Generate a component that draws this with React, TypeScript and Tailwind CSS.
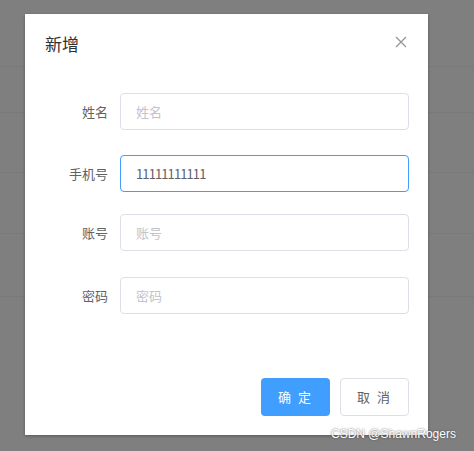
import React from 'react';

const font = { fontFamily: '"Noto Sans CJK SC", "Liberation Sans", sans-serif' };

function Field({
  label,
  placeholder,
  value,
  focused,
  className,
}: {
  label: string;
  placeholder: string;
  value?: string;
  focused?: boolean;
  className?: string;
}) {
  return (
    <div className={`flex items-center ${className ?? ''}`}>
      <label className="w-[75px] shrink-0 pr-3 text-right text-[13px] text-[#606266]">{label}</label>
      <div
        className={`flex h-[37px] flex-1 items-center rounded-[4px] border bg-white pl-[15px] text-[13px] ${
          focused ? 'border-[#409eff]' : 'border-[#dcdfe6]'
        }`}
      >
        {value ? (
          <span className="tracking-[-0.9px] text-[#606266]">{value}</span>
        ) : (
          <span className="text-[#c0c4cc]">{placeholder}</span>
        )}
      </div>
    </div>
  );
}

export default function App() {
  return (
    <div className="relative h-[451px] w-[474px] overflow-hidden bg-[#7f7f7f]" style={font}>
      {/* table rows behind the mask */}
      <div className="flex flex-col">
        <div className="h-[67px] border-b border-[#797979]" />
        <div className="h-[46px] border-b border-[#797979]" />
        <div className="h-[60px] border-b border-[#797979]" />
        <div className="h-[61px] border-b border-[#797979]" />
        <div className="h-[63px] border-b border-[#797979]" />
      </div>

      {/* dialog */}
      <div className="absolute left-[25px] top-[14px] flex h-[421px] w-[403px] flex-col bg-white shadow-[0_1px_3px_rgba(0,0,0,0.3)]">
        <div className="flex items-start justify-between pl-5 pr-[21px] pt-[19px]">
          <span className="text-[17px] leading-[22px] text-[#303133]">新增</span>
          <svg width="12" height="12" viewBox="0 0 12 12" className="mt-[3px]">
            <path d="M1 1 L11 11 M11 1 L1 11" stroke="#909399" strokeWidth="1.2" />
          </svg>
        </div>

        <div className="flex flex-col pl-5 pr-[19px] pt-[38px]">
          <Field label="姓名" placeholder="姓名" className="mb-[25px]" />
          <Field label="手机号" placeholder="手机号" value="11111111111" focused className="mb-[22px]" />
          <Field label="账号" placeholder="账号" className="mb-[26px]" />
          <Field label="密码" placeholder="密码" />
        </div>

        <div className="mt-auto flex justify-end gap-[10px] px-[19px] pb-[19px]">
          <button className="h-[38px] w-[69px] rounded-[4px] bg-[#409eff] text-[13px] tracking-[2px] text-white">
            确 定
          </button>
          <button className="h-[38px] w-[69px] rounded-[4px] border border-[#dcdfe6] bg-white text-[13px] tracking-[2px] text-[#606266]">
            取 消
          </button>
        </div>
      </div>

      {/* watermark */}
      <div
        className="absolute left-[331px] top-[427px] text-[12px] leading-[15px] text-white [text-shadow:0_0_2px_rgba(60,60,60,0.9)]"
        style={{ fontFamily: '"Liberation Sans", sans-serif' }}
      >
        CSDN @ShawnRogers
      </div>
    </div>
  );
}
